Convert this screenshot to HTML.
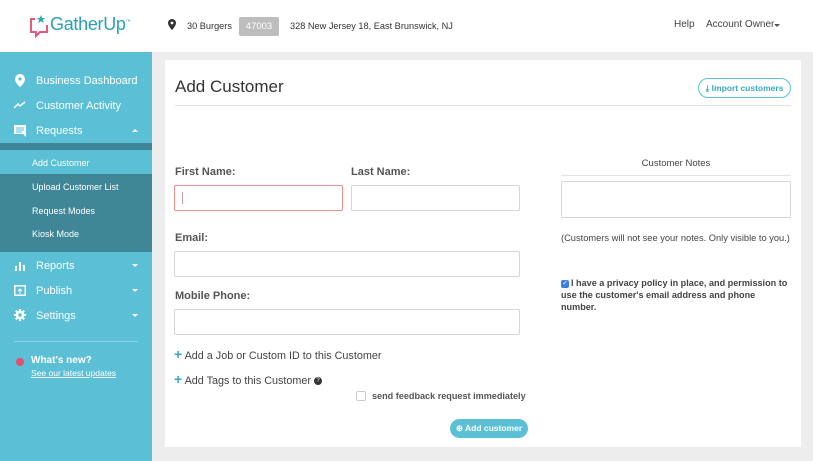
<!DOCTYPE html>
<html><head><style>
*{box-sizing:border-box;margin:0;padding:0}
body{width:813px;height:461px;overflow:hidden;background:#ededed;font-family:"Liberation Sans",Arial,sans-serif;position:relative;color:#444}
.a{position:absolute}
.top{left:0;top:0;width:813px;height:52px;background:#fff}
.side{left:0;top:52px;width:152px;height:409px;background:#5bc0d6}
.ni{position:absolute;left:36px;color:#fff;font-size:11px}
.sub{position:absolute;left:32px;color:#fff;font-size:9px}
.inp{position:absolute;background:#fff;border:1px solid #d6d6d6;border-radius:2px}
.lbl{position:absolute;font-size:11px;font-weight:bold;color:#555}
.car{position:absolute;left:132px;width:0;height:0;border-left:3.5px solid transparent;border-right:3.5px solid transparent}
</style></head><body>
<div class="a top"></div>
<svg class="a" style="left:29px;top:14px" width="20" height="24" viewBox="0 0 20 24"><path d="M6 5H2v13h5v4l4-4h7V11" fill="none" stroke="#e35a7a" stroke-width="2"/><path d="M12 1l1.2 3h3l-2.4 2 1 3-2.8-1.8L9.2 9l1-3L7.8 4h3z" fill="#2aa8b8"/></svg>
<div class="a" style="left:50px;top:14px;font-size:18px;color:#2aa0b4;letter-spacing:-0.3px">GatherUp<sup style="font-size:5px">™</sup></div>
<svg class="a" style="left:168px;top:19px" width="8" height="11" viewBox="0 0 8 11"><path d="M4 0a4 4 0 0 0-4 4c0 3 4 7 4 7s4-4 4-7a4 4 0 0 0-4-4z" fill="#333"/><circle cx="4" cy="4" r="1.4" fill="#fff"/></svg>
<div class="a" style="left:187px;top:21px;font-size:9.2px;color:#333">30 Burgers</div>
<div class="a" style="left:239px;top:17px;width:40px;height:19px;background:#bdbdbd;border-radius:2px;color:#fff;font-size:9.5px;text-align:center;line-height:19px">47003</div>
<div class="a" style="left:290px;top:21px;font-size:9.2px;color:#333">328 New Jersey 18, East Brunswick, NJ</div>
<div class="a" style="left:674px;top:19px;font-size:10px;color:#444">Help</div>
<div class="a" style="left:706px;top:19px;font-size:10px;color:#444">Account Owner</div>
<div class="a" style="left:774px;top:24px;border-left:3.5px solid transparent;border-right:3.5px solid transparent;border-top:3.5px solid #555"></div>

<div class="a side"></div>
<div class="a" style="left:0;top:143px;width:152px;height:7px;background:#3f8797"></div>
<div class="a" style="left:0;top:174px;width:152px;height:78px;background:#3f8797"></div>
<svg class="a" style="left:15px;top:74px" width="10" height="13" viewBox="0 0 10 13"><path d="M5 0a5 5 0 0 0-5 5c0 4 5 8 5 8s5-4 5-8a5 5 0 0 0-5-5z" fill="#fff"/><circle cx="5" cy="5" r="1.6" fill="#5bc0d6"/></svg>
<div class="ni" style="top:75px">Business Dashboard</div>
<svg class="a" style="left:14px;top:101px" width="12" height="8" viewBox="0 0 12 8"><path d="M0 7l4-4 2 2 5-4" fill="none" stroke="#fff" stroke-width="1.5"/></svg>
<div class="ni" style="top:100px">Customer Activity</div>
<svg class="a" style="left:14px;top:125px" width="12" height="12" viewBox="0 0 12 12"><path d="M0 0h12v12l-3-3H0z" fill="#fff"/><path d="M2 3h8M2 5h8M2 7h6" stroke="#5bc0d6"/></svg>
<div class="ni" style="top:125px">Requests</div>
<div class="car" style="top:129px;border-bottom:3.5px solid #fff"></div>
<div class="sub" style="top:158px">Add Customer</div>
<div class="sub" style="top:182px">Upload Customer List</div>
<div class="sub" style="top:206px">Request Modes</div>
<div class="sub" style="top:229px">Kiosk Mode</div>
<svg class="a" style="left:15px;top:261px" width="10" height="10"><rect x="0" y="5" width="2" height="5" fill="#fff"/><rect x="4" y="1" width="2" height="9" fill="#fff"/><rect x="8" y="4" width="2" height="6" fill="#fff"/></svg>
<div class="ni" style="top:260px">Reports</div>
<div class="car" style="top:264px;border-top:3.5px solid #fff"></div>
<svg class="a" style="left:14px;top:285px" width="12" height="11"><rect x="0.75" y="0.75" width="10.5" height="9.5" fill="none" stroke="#fff" stroke-width="1.5"/><path d="M6 9V4M4 6l2-2 2 2" stroke="#fff" fill="none"/></svg>
<div class="ni" style="top:285px">Publish</div>
<div class="car" style="top:289px;border-top:3.5px solid #fff"></div>
<svg class="a" style="left:14px;top:309px" width="12" height="12" viewBox="0 0 12 12"><g fill="#fff"><circle cx="6" cy="6" r="4.2"/><rect x="5" y="0" width="2" height="12"/><rect x="0" y="5" width="12" height="2"/><rect x="5" y="0" width="2" height="12" transform="rotate(45 6 6)"/><rect x="5" y="0" width="2" height="12" transform="rotate(-45 6 6)"/></g><circle cx="6" cy="6" r="1.8" fill="#5bc0d6"/></svg>
<div class="ni" style="top:310px">Settings</div>
<div class="car" style="top:314px;border-top:3.5px solid #fff"></div>
<div class="a" style="left:14px;top:341px;width:124px;height:1px;background:#8ad3e3"></div>
<div class="a" style="left:16px;top:358px;width:8px;height:8px;border-radius:50%;background:#e14e6f"></div>
<div class="a" style="left:31px;top:355px;font-size:10px;font-weight:bold;color:#fff">What's new?</div>
<div class="a" style="left:31px;top:368px;font-size:8.5px;color:#fff;text-decoration:underline">See our latest updates</div>

<div class="a" style="left:165px;top:60px;width:636px;height:387px;background:#fff"></div>
<div class="a" style="left:175px;top:77px;font-size:17px;color:#333">Add Customer</div>
<div class="a" style="left:698px;top:78px;width:93px;height:20px;border:1px solid #5bc0d6;border-radius:10px;font-size:8.5px;font-weight:bold;color:#3aa8c0;line-height:18px;text-align:center">⤓ Import customers</div>
<div class="a" style="left:175px;top:105px;width:616px;height:1px;background:#e2e2e2"></div>

<div class="lbl" style="left:175px;top:166px">First Name:</div>
<div class="lbl" style="left:351px;top:166px">Last Name:</div>
<div class="inp" style="left:174px;top:185px;width:169px;height:26px;border-color:#ef8e8e"></div>
<div class="a" style="left:182px;top:192px;width:1px;height:12px;background:#c9a"></div>
<div class="inp" style="left:351px;top:185px;width:169px;height:26px"></div>
<div class="lbl" style="left:175px;top:232px">Email:</div>
<div class="inp" style="left:174px;top:251px;width:346px;height:26px"></div>
<div class="lbl" style="left:175px;top:290px">Mobile Phone:</div>
<div class="inp" style="left:174px;top:309px;width:346px;height:26px"></div>
<div class="a" style="left:174px;top:346px;font-size:10.8px;color:#444"><b style="color:#3aa8c0;font-size:14px">+</b> Add a Job or Custom ID to this Customer</div>
<div class="a" style="left:174px;top:371px;font-size:10.8px;color:#444"><b style="color:#3aa8c0;font-size:14px">+</b> Add Tags to this Customer <span style="display:inline-block;width:8px;height:8px;border-radius:50%;background:#333;color:#fff;font-size:6px;text-align:center;line-height:8px;vertical-align:2px">?</span></div>
<div class="a" style="left:356px;top:391px;width:10px;height:10px;border:1px solid #ccc;border-radius:2px"></div>
<div class="a" style="left:372px;top:391px;font-size:9.1px;font-weight:bold;color:#555">send feedback request immediately</div>
<div class="a" style="left:450px;top:419px;width:78px;height:19px;background:#5bc0d6;border-radius:10px;color:#fff;font-size:8.5px;font-weight:bold;line-height:19px;text-align:center">⊕ Add customer</div>

<div class="a" style="left:561px;top:158px;width:230px;text-align:center;font-size:9.5px;color:#444">Customer Notes</div>
<div class="a" style="left:561px;top:175px;width:230px;height:1px;background:#e2e2e2"></div>
<div class="inp" style="left:561px;top:181px;width:230px;height:37px"></div>
<div class="a" style="left:561px;top:233px;font-size:9.3px;color:#444;white-space:nowrap">(Customers will not see your notes. Only visible to you.)</div>
<div class="a" style="left:561px;top:280px;width:8px;height:8px;background:#3d7fe0;border-radius:2px;color:#fff;font-size:7px;line-height:8px;text-align:center">✓</div>
<div class="a" style="left:561px;top:277px;width:240px;font-size:9.1px;font-weight:bold;color:#444;line-height:12px;white-space:nowrap"><span style="padding-left:10px">I have a privacy policy in place, and permission to</span><br>use the customer's email address and phone<br>number.</div>
</body></html>
